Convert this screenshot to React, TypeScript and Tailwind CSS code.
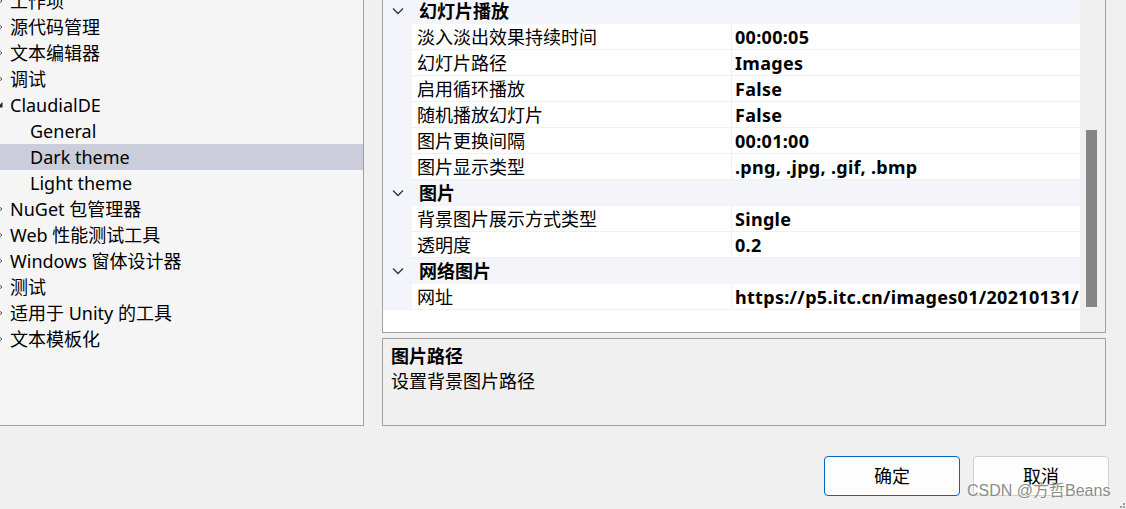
import React from "react";

const FONT = '"Noto Sans", "Noto Sans CJK SC", sans-serif';

type TreeItem = { label: string; level: 0 | 1; state: "collapsed" | "expanded" | "leaf"; selected?: boolean };

const tree: TreeItem[] = [
  { label: "工作项", level: 0, state: "collapsed" },
  { label: "源代码管理", level: 0, state: "collapsed" },
  { label: "文本编辑器", level: 0, state: "collapsed" },
  { label: "调试", level: 0, state: "collapsed" },
  { label: "ClaudialDE", level: 0, state: "expanded" },
  { label: "General", level: 1, state: "leaf" },
  { label: "Dark theme", level: 1, state: "leaf", selected: true },
  { label: "Light theme", level: 1, state: "leaf" },
  { label: "NuGet 包管理器", level: 0, state: "collapsed" },
  { label: "Web 性能测试工具", level: 0, state: "collapsed" },
  { label: "Windows 窗体设计器", level: 0, state: "collapsed" },
  { label: "测试", level: 0, state: "collapsed" },
  { label: "适用于 Unity 的工具", level: 0, state: "collapsed" },
  { label: "文本模板化", level: 0, state: "collapsed" },
];

type Row =
  | { kind: "cat"; label: string }
  | { kind: "prop"; name: string; value: string };

const rows: Row[] = [
  { kind: "cat", label: "幻灯片播放" },
  { kind: "prop", name: "淡入淡出效果持续时间", value: "00:00:05" },
  { kind: "prop", name: "幻灯片路径", value: "Images" },
  { kind: "prop", name: "启用循环播放", value: "False" },
  { kind: "prop", name: "随机播放幻灯片", value: "False" },
  { kind: "prop", name: "图片更换间隔", value: "00:01:00" },
  { kind: "prop", name: "图片显示类型", value: ".png, .jpg, .gif, .bmp" },
  { kind: "cat", label: "图片" },
  { kind: "prop", name: "背景图片展示方式类型", value: "Single" },
  { kind: "prop", name: "透明度", value: "0.2" },
  { kind: "cat", label: "网络图片" },
  { kind: "prop", name: "网址", value: "https://p5.itc.cn/images01/20210131/" },
];

function Expander({ state }: { state: TreeItem["state"] }) {
  if (state === "leaf") return <span className="w-[10px] shrink-0" />;
  return (
    <svg width="10" height="26" viewBox="0 0 10 26" className="shrink-0">
      {state === "collapsed" ? (
        <polygon points="-1,10.5 2,13 -1,15.5" fill="none" stroke="#555" strokeWidth="1" />
      ) : (
        <polygon points="2.5,10 2.5,15.5 -3,15.5" fill="#222" />
      )}
    </svg>
  );
}

function Chevron() {
  return (
    <svg width="12" height="8" viewBox="0 0 12 8" className="shrink-0">
      <polyline points="1,1.5 6,6.5 11,1.5" fill="none" stroke="#333" strokeWidth="1.3" />
    </svg>
  );
}

export default function App() {
  return (
    <div
      className="relative w-[1126px] h-[509px] overflow-hidden bg-[#f0f0f0] text-[18px] text-black"
      style={{ fontFamily: FONT }}
    >
      <div className="flex items-start">
        {/* Left tree panel */}
        <div className="w-[364px] h-[426px] shrink-0 overflow-hidden bg-[#f5f5f5] border-r border-b border-[#a0a0a0]">
          <div className="-mt-[12px] flex flex-col">
            {tree.map((t) => (
              <div
                key={t.label}
                className={`flex h-[26px] items-center leading-none ${t.selected ? "bg-[#cbcdda]" : ""}`}
              >
                <Expander state={t.state} />
                <span className={`whitespace-nowrap ${t.level === 1 ? "pl-[20px]" : ""}`}>{t.label}</span>
              </div>
            ))}
          </div>
        </div>

        {/* Right column */}
        <div className="ml-[18px] w-[724px] flex flex-col">
          {/* Property grid */}
          <div className="h-[333px] flex border-l border-r border-b border-[#a0a0a0] bg-white overflow-hidden">
            <div className="w-[697px] shrink-0 overflow-hidden">
              <div className="-mt-[2px] flex flex-col">
                {rows.map((r, i) =>
                  r.kind === "cat" ? (
                    <div key={i} className="flex h-[26px] items-center bg-[#f3f5fa]">
                      <div className="w-[29px] flex justify-center pl-[1px]">
                        <Chevron />
                      </div>
                      <span className="pl-[7px] font-bold leading-none whitespace-nowrap">{r.label}</span>
                    </div>
                  ) : (
                    <div key={i} className="flex h-[26px]">
                      <div className="w-[29px] shrink-0 bg-[#f3f5fa]" />
                      <div className="flex flex-1 border-b border-[#f0f0f0]">
                        <div className="w-[320px] shrink-0 flex items-center pl-[5px] border-r border-[#f0f0f0] leading-none whitespace-nowrap">
                          {r.name}
                        </div>
                        <div className="flex-1 flex items-center pl-[3px] font-bold tracking-[0.3px] leading-none whitespace-nowrap overflow-hidden">
                          {r.value}
                        </div>
                      </div>
                    </div>
                  )
                )}
              </div>
            </div>
            {/* Scrollbar */}
            <div className="flex-1 bg-[#f0f0f0] flex justify-center pt-[130px]">
              <div className="w-[11px] h-[177px] bg-[#858585] ml-[-2px]" />
            </div>
          </div>

          {/* Description panel */}
          <div className="mt-[5px] h-[88px] border border-[#a0a0a0] bg-[#f0f0f0] px-[8px] pt-[4px] flex flex-col">
            <div className="font-bold leading-[26px]">图片路径</div>
            <div className="leading-[24px]">设置背景图片路径</div>
          </div>
        </div>
      </div>

      {/* Buttons */}
      <div className="flex justify-end gap-[13px] pr-[17px] mt-[30px]">
        <button className="w-[136px] h-[40px] rounded-[4px] border border-[#0067c0] bg-[#fdfdfd] text-[18px] leading-none">
          确定
        </button>
        <button className="w-[136px] h-[40px] rounded-[4px] border border-[#d0d0d0] bg-[#fdfdfd] text-[18px] leading-none">
          取消
        </button>
      </div>

      {/* Watermark */}
      <div
        className="absolute left-[967px] top-[480px] text-[16px] leading-[22px] whitespace-nowrap text-[#8c8c8c] [text-shadow:0_0_2px_#ffffff]"
        style={{ fontFamily: '"Liberation Sans", "Noto Sans CJK SC", sans-serif' }}
      >
        CSDN @方哲Beans
      </div>

      {/* Resize grip */}
      <div className="absolute right-[1px] bottom-[1px] grid grid-cols-2 gap-[1px]">
        <span className="w-[2px] h-[2px]" />
        <span className="w-[2px] h-[2px] bg-[#a0a0a0]" />
        <span className="w-[2px] h-[2px] bg-[#a0a0a0]" />
        <span className="w-[2px] h-[2px] bg-[#a0a0a0]" />
      </div>
    </div>
  );
}
